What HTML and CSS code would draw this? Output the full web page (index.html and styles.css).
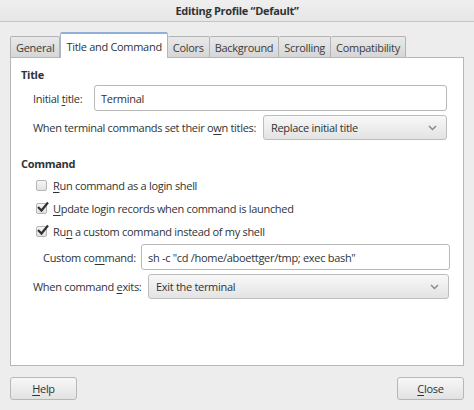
FILE: index.html
```html
<!DOCTYPE html>
<html>
<head>
<meta charset="utf-8">
<link rel="stylesheet" href="styles.css">
</head>
<body>
<div class="window">
  <div class="titlebar">Editing Profile “Default”</div>
  <div class="body">
    <div class="tabs">
      <div class="tab">General</div>
      <div class="tab active">Title and Command</div>
      <div class="tab">Colors</div>
      <div class="tab">Background</div>
      <div class="tab">Scrolling</div>
      <div class="tab">Compatibility</div>
    </div>
    <div class="panel">
      <div class="heading">Title</div>
      <div class="row r-initial">
        <span class="label">Initial <u>t</u>itle:</span>
        <div class="entry e-initial">Terminal</div>
      </div>
      <div class="row r-when">
        <span class="label">When terminal commands set their o<u>w</u>n titles:</span>
        <div class="combo c-when"><span>Replace initial title</span><svg class="chev" width="9" height="6" viewBox="0 0 9 6"><path d="M1 1 L4.5 4.5 L8 1" fill="none" stroke="#8a8a8a" stroke-width="1.5"/></svg></div>
      </div>
      <div class="heading h-command">Command</div>
      <div class="check">
        <span class="box"></span>
        <span><u>R</u>un command as a login shell</span>
      </div>
      <div class="check">
        <span class="box checked"><svg width="14" height="12" viewBox="0 0 14 12"><path d="M2 6 L5.5 9.5 L12 1.5" fill="none" stroke="#2e3436" stroke-width="2.2"/></svg></span>
        <span><u>U</u>pdate login records when command is launched</span>
      </div>
      <div class="check">
        <span class="box checked"><svg width="14" height="12" viewBox="0 0 14 12"><path d="M2 6 L5.5 9.5 L12 1.5" fill="none" stroke="#2e3436" stroke-width="2.2"/></svg></span>
        <span>Ru<u>n</u> a custom command instead of my shell</span>
      </div>
      <div class="row r-custom">
        <span class="label">Custom co<u>m</u>mand:</span>
        <div class="entry e-custom">sh -c "cd /home/aboettger/tmp; exec bash"</div>
      </div>
      <div class="row r-exits">
        <span class="label">When command <u>e</u>xits:</span>
        <div class="combo c-exits"><span>Exit the terminal</span><svg class="chev" width="9" height="6" viewBox="0 0 9 6"><path d="M1 1 L4.5 4.5 L8 1" fill="none" stroke="#8a8a8a" stroke-width="1.5"/></svg></div>
      </div>
    </div>
    <div class="footer">
      <div class="button"><u>H</u>elp</div>
      <div class="button"><u>C</u>lose</div>
    </div>
  </div>
</div>
</body>
</html>
```
FILE: styles.css
```css
* { box-sizing: border-box; }
html, body { margin: 0; padding: 0; }
body {
  width: 474px;
  height: 410px;
  background: #ededed;
  font-family: "Open Sans", "Noto Sans", sans-serif;
  font-size: 11px;
  letter-spacing: -0.3px;
  color: #2e3436;
  overflow: hidden;
}
u { text-decoration: underline; text-underline-offset: 2px; }
.window { width: 474px; height: 410px; display: flex; flex-direction: column; }
.titlebar {
  height: 22px;
  display: flex;
  align-items: center;
  justify-content: center;
  font-weight: bold;
  background: linear-gradient(#efefef, #e6e6e6);
  border-bottom: 1px solid #c4c4c4;
  color: #2e3436;
}
.body { padding: 10px 10px 0 10px; display: flex; flex-direction: column; }
.tabs { display: flex; align-items: flex-end; height: 25px; position: relative; z-index: 1; }
.tab {
  height: 21px;
  padding: 0 5px;
  display: flex;
  align-items: center;
  white-space: nowrap;
  border: 1px solid #b3b3b3;
  border-bottom: none;
  border-left: none;
  background: linear-gradient(#e9e9e9, #d6d6d6);
  color: #3c3c3c;
  border-radius: 2px 2px 0 0;
}
.tab:first-child { border-left: 1px solid #b3b3b3; }
.tab.active {
  background: #fff;
  border: 1px solid #a9b7c8;
  border-top: 2px solid #8fb1d9;
  border-bottom: none;
  margin-bottom: -1px;
  height: 26px;
  color: #2e3436;
}
.panel {
  height: 309px;
  background: #fff;
  border: 1px solid #b6b6b6;
  padding: 9px 14px 0 10px;
  display: flex;
  flex-direction: column;
}
.heading { font-weight: bold; line-height: 16px; }
.row { display: flex; align-items: center; padding-left: 12px; }
.label { white-space: nowrap; }
.r-initial { margin-top: 2px; }
.entry {
  height: 26px;
  background: #fff;
  border: 1px solid #b8b8b8;
  border-radius: 3px;
  display: flex;
  align-items: center;
  padding: 0 6px;
}
.e-initial { width: 353px; margin-left: auto; margin-right: 2px; }
.r-when { margin-top: 4px; }
.combo {
  height: 25px;
  border: 1px solid #bdbdbd;
  border-radius: 3px;
  background: linear-gradient(#f8f8f8, #e3e3e3);
  display: flex;
  align-items: center;
  justify-content: space-between;
  padding: 0 9px 0 7px;
}
.c-when { width: 184px; margin-left: auto; margin-right: 2px; }
.h-command { margin-top: 16px; }
.check { display: flex; align-items: center; height: 23px; padding-left: 15px; gap: 6px; }
.h-command + .check { margin-top: 2px; }
.box {
  width: 11px; height: 11px;
  border: 1px solid #b5b5b5;
  border-radius: 2px;
  background: linear-gradient(#f5f5f5, #e2e2e2);
  position: relative;
}
.box.checked svg { position: absolute; left: -1px; top: -3px; }
.r-custom { margin-top: 1px; padding-left: 22px; }
.e-custom { width: 309px; margin-left: auto; margin-right: -1px; }
.r-exits { margin-top: 4px; }
.c-exits { width: 301px; margin-left: auto; }
.footer { display: flex; justify-content: space-between; margin-top: 11px; }
.button {
  width: 67px; height: 23px;
  border: 1px solid #b7b7b7;
  border-radius: 3px;
  background: linear-gradient(#f7f7f7, #e2e2e2);
  display: flex; align-items: center; justify-content: center;
}
```
